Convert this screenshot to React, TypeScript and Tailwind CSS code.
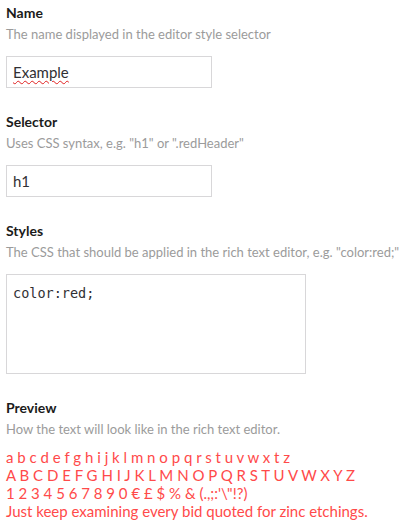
const lato = "font-['Lato','Liberation_Sans',sans-serif]";

function Field({ label, help, children }: { label: string; help: string; children: React.ReactNode }) {
  return (
    <div className="mb-6">
      <div className="text-[14px] leading-5 font-bold text-[#1b1b1b]">{label}</div>
      <div className="mt-px text-[13px] leading-5 text-[#9b9b9b] whitespace-nowrap">{help}</div>
      <div className="mt-3">{children}</div>
    </div>
  );
}

export default function App() {
  return (
    <div className={`${lato} bg-white w-[402px] h-[520px] overflow-hidden px-[6px] pt-[3px]`}>
      <Field label="Name" help="The name displayed in the editor style selector">
        <div className="w-[206px] h-[32px] border border-[#d8d7d9] flex items-center px-[6px] text-[15px] text-[#303033]">
          <span className="underline decoration-wavy decoration-[#e02020] decoration-1 underline-offset-2">Example</span>
        </div>
      </Field>

      <Field label="Selector" help={'Uses CSS syntax, e.g. "h1" or ".redHeader"'}>
        <div className="w-[206px] h-[32px] border border-[#d8d7d9] flex items-center px-[6px] text-[15px] text-[#303033]">
          h1
        </div>
      </Field>

      <Field label="Styles" help={'The CSS that should be applied in the rich text editor, e.g. "color:red;"'}>
        <div className="w-[300px] h-[100px] border border-[#d8d7d9] px-[6px] pt-[8px] font-['DejaVu_Sans_Mono',monospace] text-[13.5px] leading-5 text-[#303033]">
          color:red;
        </div>
      </Field>

      <div>
        <div className="text-[14px] leading-5 font-bold text-[#1b1b1b]">Preview</div>
        <div className="mt-px text-[13px] leading-5 text-[#9b9b9b] whitespace-nowrap">How the text will look like in the rich text editor.</div>
        <div className="mt-[9px] text-[15px] leading-[18px] text-[#ff4a4a] whitespace-nowrap">
          <div>a b c d e f g h i j k l m n o p q r s t u v w x t z</div>
          <div>A B C D E F G H I J K L M N O P Q R S T U V W X Y Z</div>
          <div>1 2 3 4 5 6 7 8 9 0 € £ $ % &amp; (.,;:'\"!?)</div>
          <div>Just keep examining every bid quoted for zinc etchings.</div>
        </div>
      </div>
    </div>
  );
}
